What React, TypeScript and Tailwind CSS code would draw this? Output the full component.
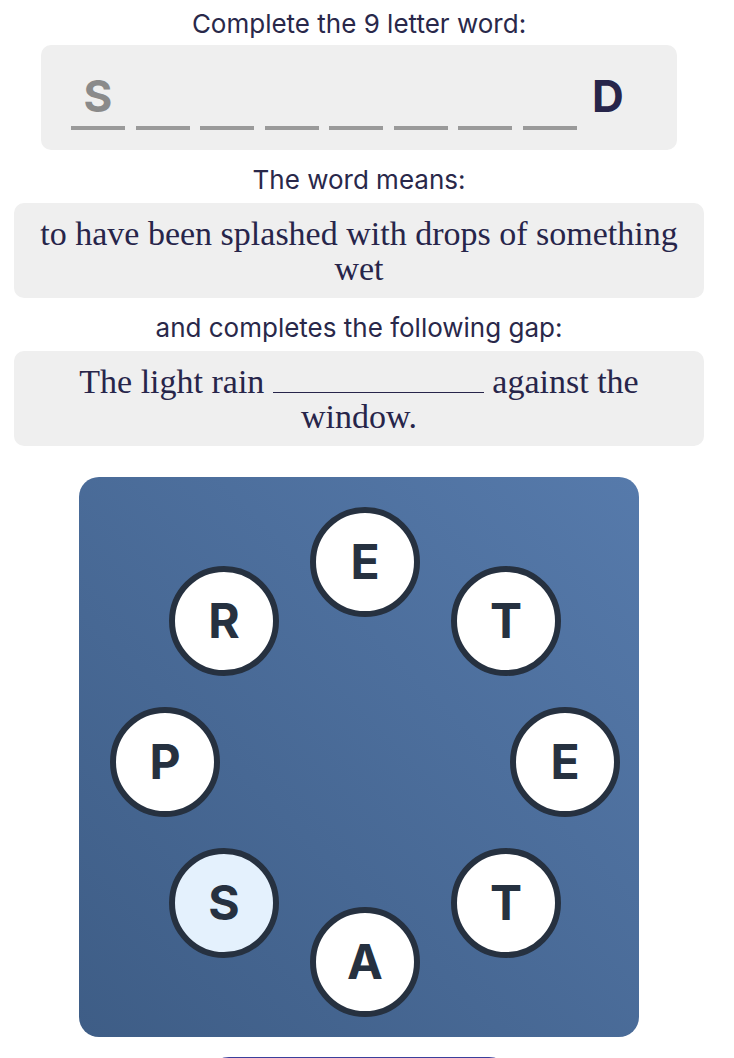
import React from "react";

const SANS = "font-['Inter',sans-serif]";
const SERIF = "font-['Liberation_Serif',serif]";

interface Tile {
  letter: string;
  pos: string;
  picked?: boolean;
}

// ring of letter tiles, clockwise from the top
const TILES: Tile[] = [
  { letter: "E", pos: "left-[231px] top-[30px]" },
  { letter: "T", pos: "left-[372px] top-[89px]" },
  { letter: "E", pos: "left-[431px] top-[230px]" },
  { letter: "T", pos: "left-[372px] top-[371px]" },
  { letter: "A", pos: "left-[231px] top-[430px]" },
  { letter: "S", pos: "left-[90px] top-[371px]", picked: true },
  { letter: "P", pos: "left-[31px] top-[230px]" },
  { letter: "R", pos: "left-[90px] top-[89px]" },
];

const SLOTS = ["S", "", "", "", "", "", "", ""];

function Label({ children, h }: { children: React.ReactNode; h: string }) {
  return (
    <div className={`${h} flex items-center justify-center text-[26px] text-[#29284a] ${SANS}`}>
      {children}
    </div>
  );
}

export default function App() {
  return (
    <div className="w-[718px] bg-white flex flex-col items-center">
      <Label h="h-[45px] pt-[2px]">Complete the 9 letter word:</Label>

      {/* answer slots */}
      <div className="w-[636px] h-[105px] rounded-[10px] bg-[#efefef] pl-[30px] pt-[29px] flex">
        <div className={`flex gap-[10.5px] ${SANS}`}>
          {SLOTS.map((l, i) => (
            <div key={i} className="w-[54px] flex flex-col items-center">
              <div className="h-[44px] text-[44px] leading-none font-bold text-[#8a8a8a]">{l}</div>
              <div className="mt-[8px] h-[4px] w-full bg-[#9a9a9a]" />
            </div>
          ))}
          <div className="w-[42px] flex flex-col items-center">
            <div className="h-[44px] text-[44px] leading-none font-bold text-[#27254a]">D</div>
          </div>
        </div>
      </div>

      <Label h="h-[53px] pt-[6px]">The word means:</Label>

      <div className={`w-[690px] h-[95px] rounded-[10px] bg-[#efefef] px-3 flex items-center justify-center text-center text-[34px] leading-[35px] text-[#27254a] ${SERIF}`}>
        to have been splashed with drops of something wet
      </div>

      <Label h="h-[53px] pt-[6px]">and completes the following gap:</Label>

      <div className={`w-[690px] h-[95px] rounded-[10px] bg-[#efefef] px-3 flex items-center justify-center text-center text-[34px] leading-[35px] text-[#27254a] ${SERIF}`}>
        <p>
          The light rain{" "}
          <span className="inline-block w-[211px] border-b-[1.5px] border-[#27254a] align-baseline" />{" "}
          against the window.
        </p>
      </div>

      {/* letter wheel */}
      <div className="relative mt-[31px] w-[560px] h-[560px] rounded-[20px] bg-linear-to-tr from-[#3e5d86] to-[#567aab]">
        {TILES.map((t, i) => (
          <div
            key={i}
            className={`absolute ${t.pos} w-[110px] h-[110px] rounded-full border-[6px] border-[#263140] flex items-center justify-center ${
              t.picked ? "bg-[#e4f1fd]" : "bg-white"
            }`}
          >
            <span className={`text-[48px] leading-none font-bold text-[#263140] ${SANS}`}>{t.letter}</span>
          </div>
        ))}
      </div>

      <button className="mt-5 w-[312px] h-[52px] rounded-full bg-[#3b409c] shrink-0" />
    </div>
  );
}
